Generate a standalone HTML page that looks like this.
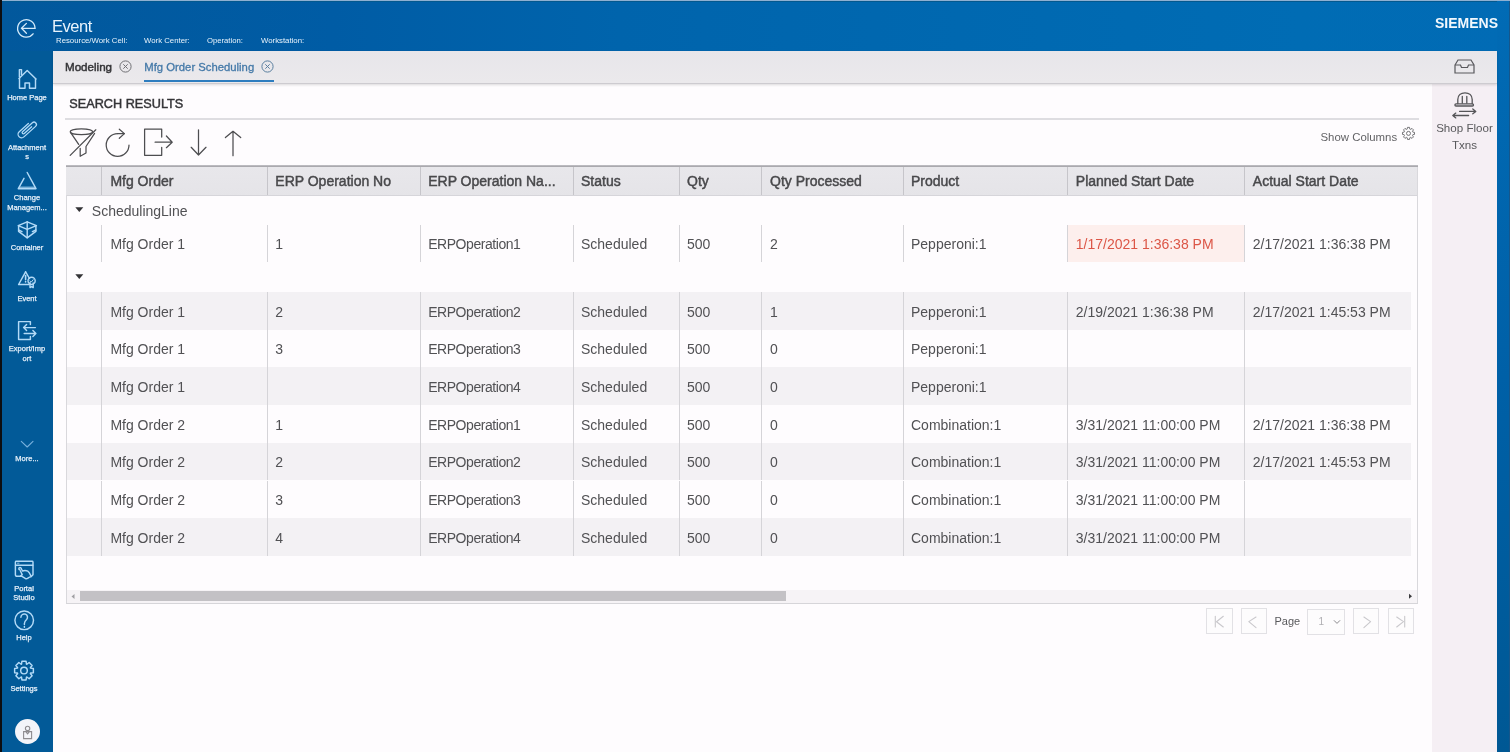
<!DOCTYPE html>
<html><head><meta charset="utf-8">
<style>
*{margin:0;padding:0;box-sizing:border-box}
html,body{will-change:transform;width:1510px;height:752px;overflow:hidden;background:#fefcfe;font-family:"Liberation Sans",sans-serif}
.a{position:absolute}
#hdr{left:0;top:0;width:1510px;height:51px;background:linear-gradient(90deg,#02589c 0%,#005ca5 22%,#0064ac 41%,#006cb4 86%,#016bb5 100%)}
#topline{left:0;top:0;width:1510px;height:1px;background:#8eb0d2;box-shadow:0 1px 0 #03598f}
#lstrip{left:0;top:0;width:2px;height:752px;background:#0d0d10}
#side{left:2px;top:51px;width:51px;height:701px;background:#025a98}
#rstrip{left:1497px;top:1px;width:13px;height:751px;background:linear-gradient(180deg,#016bb5 0%,#0060a7 50%,#005894 100%)}
.wt{color:#e8f3fc}
.sl{color:#e6f0fa;font-size:7.5px;text-align:center;width:50px;left:2px;line-height:9px;-webkit-text-stroke:0.25px #e6f0fa}
#tabbar{left:53px;top:51px;width:1444px;height:33px;background:linear-gradient(#e7e6ea,#ebe9ec);border-bottom:1px solid #cdcbd0;box-shadow:0 1px 2.5px rgba(0,0,0,.14)}
#content{left:53px;top:84px;width:1379px;height:668px;background:#fefcfe}
#rpanel{left:1432px;top:84px;width:65px;height:668px;background:#f5eff4}
.txt{color:#515154;font-size:14px;white-space:nowrap}
.hd{color:#48484b;font-size:14px;white-space:nowrap;-webkit-text-stroke:0.45px #48484b}
.vs{width:1px;background:#d5d4d8}
</style></head><body>
<div class="a" id="hdr"></div>
<div class="a" id="topline"></div>
<div class="a" id="side"></div>
<div class="a" id="lstrip"></div>
<div class="a" id="rstrip"></div>
<div class="a" style="left:1509px;top:1px;width:1px;height:751px;background:#17568a"></div>

<!-- header text -->
<svg class="a" style="left:14px;top:16px" width="24" height="24" viewBox="0 0 24 24" fill="none" stroke="#d4eafa" stroke-width="1.3" stroke-linecap="round">
<path d="M21 12.3 A8.7 8.7 0 1 0 19.1 17.8"/><path d="M7.8 12.3 H21"/><path d="M12.4 7.4 L7.5 12.3 L12.4 17.2"/>
</svg>
<div class="a wt" style="left:52px;top:16px;font-size:16.5px;letter-spacing:-0.45px;line-height:20px">Event</div>
<div class="a wt" style="left:56px;top:35.5px;font-size:7.8px;line-height:9px">Resource/Work Cell:</div>
<div class="a wt" style="left:144px;top:35.5px;font-size:7.8px;line-height:9px">Work Center:</div>
<div class="a wt" style="left:207px;top:35.5px;font-size:7.7px;line-height:9px">Operation:</div>
<div class="a wt" style="left:261px;top:35.5px;font-size:7.8px;line-height:9px">Workstation:</div>
<div class="a" style="left:1435px;top:14.5px;font-size:14px;font-weight:bold;color:#f2f8fd;line-height:17px">SIEMENS</div>


<!-- sidebar icons -->
<svg class="a" style="left:0;top:0" width="53" height="752" viewBox="0 0 53 752" fill="none" stroke="#b3daf7" stroke-width="1.45" stroke-linejoin="round" stroke-linecap="round">
<!-- home -->
<path d="M19.5 78.3 V88.3 H25 V83 H29.5 V88.3 H35.5 V78.8"/>
<path d="M19 78.5 L27.2 70.4 L36 79"/>
<path d="M19.4 76.8 V69.6 H21.5 V74.4"/>
<!-- clip -->
<g transform="translate(27,129.4) rotate(48)">
<path d="M-3.5 -5 V7.3 A3.5 3.5 0 0 0 3.5 7.3 V-8.4 A2.4 2.4 0 0 0 -1.3 -8.4 V4.8 A1.25 1.25 0 0 0 1.2 4.8 V-5.2" stroke-width="1.3"/>
</g>
<!-- delta -->
<path d="M27.2 172.5 L36 188.7 H18.3 L24 178.3"/>
<path d="M19.6 187.2 H34.8" stroke-width="1"/>
<!-- container -->
<path d="M18.2 225.6 L27.2 221.8 L36.4 225.6 L27.2 229.4 Z"/>
<path d="M27.2 221.8 V229.4 V237.8"/>
<path d="M18.6 226 V231.4 L27.2 237.8 L35.9 231.4 V226"/>
<path d="M18.6 230 L22 231.6 M35.9 230 L32.4 231.6"/>
<!-- event -->
<path d="M25.6 271.8 L18.6 284.5 H29"/><path d="M25.6 271.8 L29.5 278.5"/>
<path d="M25.6 275.6 V279.6" stroke-width="1.6"/><path d="M25.6 281.6 V282" stroke-width="1.6"/>
<circle cx="31.6" cy="280.8" r="3.6"/><path d="M30.1 280.9 L31.3 282.1 L33.2 279.7" stroke-width="1"/><path d="M30 282.5 L30 287.6 L31.6 286.6 L33.2 287.6 V283"/>
<!-- export -->
<path d="M30.4 324.6 V321.6 H18.6 V339.4 H30.4 V336.4"/>
<path d="M23.6 327.6 H35.4 M26.6 324.6 L23.6 327.6 L26.6 330.6"/>
<path d="M24.2 333.4 H35.9 M32.9 330.4 L35.9 333.4 L32.9 336.4"/>
<!-- more -->
<path d="M21.3 441.3 L27.2 447 L33 441.3" stroke-width="1.1" stroke="#78b0dc"/>
<!-- portal -->
<path d="M15.4 575 V562 A0.8 0.8 0 0 1 16.2 561.3 H32.2 A0.8 0.8 0 0 1 33 562 V574.8 L31 576.8 C28 577 27.5 579.5 25.6 578.6 L22 576.3 L16.2 576.3 Z"/>
<path d="M15.6 565.2 H32.8"/><path d="M17.5 563.2 H19" stroke-width="0.8"/>
<path d="M19.8 569.8 A1.2 1.2 0 1 1 21.2 568.5 L22.5 571 C24 570.4 26 570.3 27.8 571.2 C29.2 572 30 573.8 31 576"/>
<path d="M20.3 570.8 L22.2 574.6 L20.6 576"/>
<!-- help -->
<circle cx="24.2" cy="620.3" r="9.3"/>
<path d="M20.9 617.2 A3.3 3.3 0 1 1 26.6 619.5 C25.3 620.6 24.4 621.6 24.4 623.6 V624.6"/><path d="M24.4 626.6 V627.2" stroke-width="1.5"/>
<!-- gear -->
<path d="M21.53 664.05 L21.90 661.23 L26.10 661.23 L26.47 664.05 L26.89 664.22 L29.14 662.49 L32.11 665.46 L30.38 667.71 L30.55 668.13 L33.37 668.50 L33.37 672.70 L30.55 673.07 L30.38 673.49 L32.11 675.74 L29.14 678.71 L26.89 676.98 L26.47 677.15 L26.10 679.97 L21.90 679.97 L21.53 677.15 L21.11 676.98 L18.86 678.71 L15.89 675.74 L17.62 673.49 L17.45 673.07 L14.63 672.70 L14.63 668.50 L17.45 668.13 L17.62 667.71 L15.89 665.46 L18.86 662.49 L21.11 664.22 Z"/>
<circle cx="24" cy="670.6" r="3.3"/>
</svg>
<div class="a sl" style="top:92.5px">Home Page</div>
<div class="a sl" style="top:143px">Attachment</div>
<div class="a sl" style="top:151.5px">s</div>
<div class="a sl" style="top:193.3px">Change</div>
<div class="a sl" style="top:202.5px">Managem...</div>
<div class="a sl" style="top:243px">Container</div>
<div class="a sl" style="top:293.8px">Event</div>
<div class="a sl" style="top:344px">Export/Imp</div>
<div class="a sl" style="top:353.5px">ort</div>
<div class="a sl" style="top:453.8px">More...</div>
<div class="a sl" style="top:584px;left:-1px">Portal</div>
<div class="a sl" style="top:592.5px;left:-1px">Studio</div>
<div class="a sl" style="top:633px;left:-1px">Help</div>
<div class="a sl" style="top:683.5px;left:-1px">Settings</div>
<div class="a" style="left:14.7px;top:719px;width:25px;height:25px;border-radius:50%;background:#f3f4f9"></div>
<svg class="a" style="left:14.7px;top:719px" width="25" height="25" viewBox="0 0 25 25" fill="none" stroke="#8e8c90" stroke-width="1.1">
<circle cx="12.6" cy="9.4" r="2.2"/><path d="M8.6 12.6 H16.6 V19.6 H8.6 Z M10.8 12.6 L12.6 14.8 L14.4 12.6"/>
</svg>

<!-- tab bar -->
<div class="a" id="content"></div>
<div class="a" id="rpanel"></div>
<div class="a" id="tabbar"></div>
<div class="a" style="left:65px;top:59.5px;font-size:11.6px;color:#333336;line-height:13px;-webkit-text-stroke:0.45px #333336">Modeling</div>
<svg class="a" style="left:119px;top:60px" width="13" height="13" viewBox="0 0 13 13" fill="none" stroke="#707074" stroke-width="1"><circle cx="6.5" cy="6.5" r="5.6"/><path d="M4.3 4.3 L8.7 8.7 M8.7 4.3 L4.3 8.7"/></svg>
<div class="a" style="left:144.3px;top:60.6px;font-size:11.3px;color:#4479a8;line-height:13px;-webkit-text-stroke:0.3px #4479a8">Mfg Order Scheduling</div>
<svg class="a" style="left:261px;top:60px" width="13" height="13" viewBox="0 0 13 13" fill="none" stroke="#5a7f9f" stroke-width="1"><circle cx="6.5" cy="6.5" r="5.6"/><path d="M4.3 4.3 L8.7 8.7 M8.7 4.3 L4.3 8.7"/></svg>
<div class="a" style="left:144px;top:80px;width:130px;height:2px;background:#2e7dbf"></div>
<svg class="a" style="left:1454px;top:59px" width="21" height="15" viewBox="0 0 21 15" fill="none" stroke="#58585c" stroke-width="1.2">
<path d="M1 6 L4 1 H17 L20 6 V14 H1 Z"/><path d="M1 6 H6.5 L7.5 8.5 H13.5 L14.5 6 H20"/>
</svg>




<!-- right panel content -->
<svg class="a" style="left:1446px;top:84px" width="36" height="40" viewBox="1446 84 36 40" fill="none" stroke="#555558" stroke-width="1.3" stroke-linejoin="round" stroke-linecap="round">
<rect x="1454.9" y="103.8" width="18.6" height="2.2" rx="1.1"/>
<path d="M1457.8 103.6 V99.6 C1457.8 95.2 1461 92.9 1465 92.9 C1469 92.9 1472.2 95.2 1472.2 99.6 V103.6"/>
<path d="M1462.3 96.5 V103 M1466.8 96.5 V103"/>
<path d="M1459.6 111.4 H1475.6 M1472.8 109 L1475.8 111.4 L1472.8 113.8"/>
<path d="M1468.6 115.5 H1453 M1455.8 113.1 L1452.8 115.5 L1455.8 117.9"/>
</svg>
<div class="a" style="left:1432px;top:119.8px;width:65px;text-align:center;font-size:11.6px;line-height:16.7px;color:#59595c">Shop Floor<br>Txns</div>

<!-- section title -->
<div class="a" style="left:69.3px;top:95.8px;font-size:12.7px;line-height:16px;color:#343437;-webkit-text-stroke:0.45px #343437">SEARCH RESULTS</div>
<div class="a" style="left:65px;top:118px;width:1354px;height:1.5px;background:#dedde1"></div>

<!-- toolbar -->
<svg class="a" style="left:60px;top:122px" width="200" height="40" viewBox="60 122 200 40" fill="none" stroke="#4d4d50" stroke-width="1.25" stroke-linejoin="round" stroke-linecap="round">
<ellipse cx="81.4" cy="131.8" rx="11.2" ry="2.9"/>
<path d="M70.5 132.3 L78.7 144.4"/>
<path d="M80.2 148.3 V156.3 L86 153 V146.5 L94.6 133.4"/>
<path d="M70.2 155.4 L95.8 129.8"/>
<path d="M117.6 133.6 A11.4 11.4 0 1 0 129 145"/><path d="M117.6 133.6 H124.3"/>
<path d="M119.3 129.2 L124.4 133.6 L119.3 138.3"/>
<path d="M161.7 137 V129.1 H144.6 V155.3 H161.7 V147.3"/>
<path d="M155.1 142.2 H172 M166.4 136 L172.2 142.2 L166.4 147.7"/>
<path d="M198.5 129.8 V155 M191.2 147.3 L198.5 155 L206 147.3"/>
<path d="M233 131.3 V155.7 M225.4 137.5 L233 131.3 L240.7 137.5"/>
</svg>
<div class="a" style="left:1320.5px;top:129.8px;font-size:11.4px;line-height:14px;color:#636366">Show Columns</div>
<svg class="a" style="left:1401px;top:126px" width="15" height="15" viewBox="0 0 15 15" fill="none" stroke="#6e6e71" stroke-width="0.95" stroke-linejoin="round"><path d="M6.17 3.10 L6.47 1.39 L8.53 1.39 L8.83 3.10 L9.60 3.42 L11.02 2.42 L12.48 3.88 L11.48 5.30 L11.80 6.07 L13.51 6.37 L13.51 8.43 L11.80 8.73 L11.48 9.50 L12.48 10.92 L11.02 12.38 L9.60 11.38 L8.83 11.70 L8.53 13.41 L6.47 13.41 L6.17 11.70 L5.40 11.38 L3.98 12.38 L2.52 10.92 L3.52 9.50 L3.20 8.73 L1.49 8.43 L1.49 6.37 L3.20 6.07 L3.52 5.30 L2.52 3.88 L3.98 2.42 L5.40 3.42 Z"/><circle cx="7.5" cy="7.4" r="2"/></svg>


<!-- pagination -->
<div class="a" style="left:1206px;top:608px;width:26.5px;height:26px;border:1px solid #e2e1e5;background:#fdfcfd"></div>
<div class="a" style="left:1240.5px;top:608px;width:26.5px;height:26px;border:1px solid #e2e1e5;background:#fdfcfd"></div>
<div class="a" style="left:1307px;top:608.5px;width:37.5px;height:26px;border:1px solid #e2e1e5;background:#fdfcfd"></div>
<div class="a" style="left:1352.7px;top:608px;width:26.5px;height:26px;border:1px solid #e2e1e5;background:#fdfcfd"></div>
<div class="a" style="left:1387.6px;top:608px;width:26px;height:26px;border:1px solid #e2e1e5;background:#fdfcfd"></div>
<svg class="a" style="left:1200px;top:600px" width="220" height="42" viewBox="1200 600 220 42" fill="none" stroke="#c9c8cc" stroke-width="1.1" stroke-linejoin="round" stroke-linecap="round">
<path d="M1215.3 616.3 V627 M1223.3 616.3 L1216.5 621.7 L1223.3 627"/>
<path d="M1256 617 L1248.8 621.6 L1256 627.7"/>
<path d="M1363.9 617 L1370.6 621.6 L1363.9 627.7"/>
<path d="M1396.7 617 L1403.5 621.6 L1396.7 627 M1404.7 616.3 V627"/>
<path d="M1334.2 620.6 L1337 623.4 L1339.8 620.6" stroke="#8a898d" stroke-width="1"/>
</svg>
<div class="a" style="left:1274.5px;top:614px;font-size:11px;line-height:14px;color:#59595c">Page</div>
<div class="a" style="left:1318.5px;top:614.5px;font-size:10px;line-height:14px;color:#b0afb3">1</div>

<!-- TABLE START -->
<div class="a" style="left:66.2px;top:165px;width:1351.3999999999999px;height:2.5px;background:linear-gradient(#c4c3c8,#aaa9ae 50%,#d2d1d6)"></div>
<div class="a" style="left:66.2px;top:167px;width:1351.3999999999999px;height:28.5px;background:linear-gradient(#e8e7eb,#e5e4e8)"></div>
<div class="a" style="left:66.2px;top:194.5px;width:1351.3999999999999px;height:1px;background:#d6d5da"></div>
<div class="a vs" style="left:101.1px;top:167px;height:28px;background:#c6c5ca"></div>
<div class="a vs" style="left:266.7px;top:167px;height:28px;background:#c6c5ca"></div>
<div class="a vs" style="left:419.6px;top:167px;height:28px;background:#c6c5ca"></div>
<div class="a vs" style="left:573.0px;top:167px;height:28px;background:#c6c5ca"></div>
<div class="a vs" style="left:679.1px;top:167px;height:28px;background:#c6c5ca"></div>
<div class="a vs" style="left:761.0px;top:167px;height:28px;background:#c6c5ca"></div>
<div class="a vs" style="left:902.8px;top:167px;height:28px;background:#c6c5ca"></div>
<div class="a vs" style="left:1067.2px;top:167px;height:28px;background:#c6c5ca"></div>
<div class="a vs" style="left:1244.1px;top:167px;height:28px;background:#c6c5ca"></div>
<div class="a hd" style="left:110.4px;top:172px;line-height:18px">Mfg Order</div>
<div class="a hd" style="left:275.3px;top:172px;line-height:18px">ERP Operation No</div>
<div class="a hd" style="left:428.2px;top:172px;line-height:18px">ERP Operation Na...</div>
<div class="a hd" style="left:581px;top:172px;line-height:18px">Status</div>
<div class="a hd" style="left:687px;top:172px;line-height:18px">Qty</div>
<div class="a hd" style="left:770px;top:172px;line-height:18px">Qty Processed</div>
<div class="a hd" style="left:911px;top:172px;line-height:18px">Product</div>
<div class="a hd" style="left:1075.8px;top:172px;line-height:18px">Planned Start Date</div>
<div class="a hd" style="left:1252.8px;top:172px;line-height:18px">Actual Start Date</div>
<svg class="a" style="left:74.5px;top:207.2px" width="9" height="6" viewBox="0 0 9 6"><path d="M0.3 0.3 H8.3 L4.3 5 Z" fill="#333336"/></svg>
<div class="a txt" style="left:91.8px;top:202.1px;line-height:18px">SchedulingLine</div>
<div class="a" style="left:66.2px;top:224.50px;width:1344.8px;height:37.60px;background:#fefcfe"></div>
<div class="a" style="left:1068px;top:224.50px;width:176.5px;height:37.60px;background:#fdefed"></div>
<div class="a vs" style="left:101.1px;top:224.50px;height:37.60px"></div>
<div class="a vs" style="left:266.7px;top:224.50px;height:37.60px"></div>
<div class="a vs" style="left:419.6px;top:224.50px;height:37.60px"></div>
<div class="a vs" style="left:573.0px;top:224.50px;height:37.60px"></div>
<div class="a vs" style="left:679.1px;top:224.50px;height:37.60px"></div>
<div class="a vs" style="left:761.0px;top:224.50px;height:37.60px"></div>
<div class="a vs" style="left:902.8px;top:224.50px;height:37.60px"></div>
<div class="a vs" style="left:1067.2px;top:224.50px;height:37.60px"></div>
<div class="a vs" style="left:1244.1px;top:224.50px;height:37.60px"></div>
<div class="a txt" style="left:110.4px;top:234.9px;line-height:18px">Mfg Order 1</div>
<div class="a txt" style="left:275.3px;top:234.9px;line-height:18px">1</div>
<div class="a txt" style="letter-spacing:-0.45px;left:428.2px;top:234.9px;line-height:18px">ERPOperation1</div>
<div class="a txt" style="left:581px;top:234.9px;line-height:18px">Scheduled</div>
<div class="a txt" style="left:687px;top:234.9px;line-height:18px">500</div>
<div class="a txt" style="left:770px;top:234.9px;line-height:18px">2</div>
<div class="a txt" style="left:911px;top:234.9px;line-height:18px">Pepperoni:1</div>
<div class="a txt" style="color:#dc5647;left:1075.8px;top:234.9px;line-height:18px">1/17/2021 1:36:38 PM</div>
<div class="a txt" style="left:1252.8px;top:234.9px;line-height:18px">2/17/2021 1:36:38 PM</div>
<svg class="a" style="left:74.5px;top:274.4px" width="9" height="6" viewBox="0 0 9 6"><path d="M0.3 0.3 H8.3 L4.3 5 Z" fill="#333336"/></svg>
<div class="a" style="left:66.2px;top:292.00px;width:1344.8px;height:37.70px;background:#f3f1f4"></div>
<div class="a vs" style="left:101.1px;top:292.00px;height:37.70px"></div>
<div class="a vs" style="left:266.7px;top:292.00px;height:37.70px"></div>
<div class="a vs" style="left:419.6px;top:292.00px;height:37.70px"></div>
<div class="a vs" style="left:573.0px;top:292.00px;height:37.70px"></div>
<div class="a vs" style="left:679.1px;top:292.00px;height:37.70px"></div>
<div class="a vs" style="left:761.0px;top:292.00px;height:37.70px"></div>
<div class="a vs" style="left:902.8px;top:292.00px;height:37.70px"></div>
<div class="a vs" style="left:1067.2px;top:292.00px;height:37.70px"></div>
<div class="a vs" style="left:1244.1px;top:292.00px;height:37.70px"></div>
<div class="a txt" style="left:110.4px;top:302.5px;line-height:18px">Mfg Order 1</div>
<div class="a txt" style="left:275.3px;top:302.5px;line-height:18px">2</div>
<div class="a txt" style="letter-spacing:-0.45px;left:428.2px;top:302.5px;line-height:18px">ERPOperation2</div>
<div class="a txt" style="left:581px;top:302.5px;line-height:18px">Scheduled</div>
<div class="a txt" style="left:687px;top:302.5px;line-height:18px">500</div>
<div class="a txt" style="left:770px;top:302.5px;line-height:18px">1</div>
<div class="a txt" style="left:911px;top:302.5px;line-height:18px">Pepperoni:1</div>
<div class="a txt" style="left:1075.8px;top:302.5px;line-height:18px">2/19/2021 1:36:38 PM</div>
<div class="a txt" style="left:1252.8px;top:302.5px;line-height:18px">2/17/2021 1:45:53 PM</div>
<div class="a" style="left:66.2px;top:329.70px;width:1344.8px;height:37.70px;background:#fefcfe"></div>
<div class="a vs" style="left:101.1px;top:329.70px;height:37.70px"></div>
<div class="a vs" style="left:266.7px;top:329.70px;height:37.70px"></div>
<div class="a vs" style="left:419.6px;top:329.70px;height:37.70px"></div>
<div class="a vs" style="left:573.0px;top:329.70px;height:37.70px"></div>
<div class="a vs" style="left:679.1px;top:329.70px;height:37.70px"></div>
<div class="a vs" style="left:761.0px;top:329.70px;height:37.70px"></div>
<div class="a vs" style="left:902.8px;top:329.70px;height:37.70px"></div>
<div class="a vs" style="left:1067.2px;top:329.70px;height:37.70px"></div>
<div class="a vs" style="left:1244.1px;top:329.70px;height:37.70px"></div>
<div class="a txt" style="left:110.4px;top:340.2px;line-height:18px">Mfg Order 1</div>
<div class="a txt" style="left:275.3px;top:340.2px;line-height:18px">3</div>
<div class="a txt" style="letter-spacing:-0.45px;left:428.2px;top:340.2px;line-height:18px">ERPOperation3</div>
<div class="a txt" style="left:581px;top:340.2px;line-height:18px">Scheduled</div>
<div class="a txt" style="left:687px;top:340.2px;line-height:18px">500</div>
<div class="a txt" style="left:770px;top:340.2px;line-height:18px">0</div>
<div class="a txt" style="left:911px;top:340.2px;line-height:18px">Pepperoni:1</div>
<div class="a" style="left:66.2px;top:367.40px;width:1344.8px;height:37.70px;background:#f3f1f4"></div>
<div class="a vs" style="left:101.1px;top:367.40px;height:37.70px"></div>
<div class="a vs" style="left:266.7px;top:367.40px;height:37.70px"></div>
<div class="a vs" style="left:419.6px;top:367.40px;height:37.70px"></div>
<div class="a vs" style="left:573.0px;top:367.40px;height:37.70px"></div>
<div class="a vs" style="left:679.1px;top:367.40px;height:37.70px"></div>
<div class="a vs" style="left:761.0px;top:367.40px;height:37.70px"></div>
<div class="a vs" style="left:902.8px;top:367.40px;height:37.70px"></div>
<div class="a vs" style="left:1067.2px;top:367.40px;height:37.70px"></div>
<div class="a vs" style="left:1244.1px;top:367.40px;height:37.70px"></div>
<div class="a txt" style="left:110.4px;top:377.9px;line-height:18px">Mfg Order 1</div>
<div class="a txt" style="letter-spacing:-0.45px;left:428.2px;top:377.9px;line-height:18px">ERPOperation4</div>
<div class="a txt" style="left:581px;top:377.9px;line-height:18px">Scheduled</div>
<div class="a txt" style="left:687px;top:377.9px;line-height:18px">500</div>
<div class="a txt" style="left:770px;top:377.9px;line-height:18px">0</div>
<div class="a txt" style="left:911px;top:377.9px;line-height:18px">Pepperoni:1</div>
<div class="a" style="left:66.2px;top:405.10px;width:1344.8px;height:37.70px;background:#fefcfe"></div>
<div class="a vs" style="left:101.1px;top:405.10px;height:37.70px"></div>
<div class="a vs" style="left:266.7px;top:405.10px;height:37.70px"></div>
<div class="a vs" style="left:419.6px;top:405.10px;height:37.70px"></div>
<div class="a vs" style="left:573.0px;top:405.10px;height:37.70px"></div>
<div class="a vs" style="left:679.1px;top:405.10px;height:37.70px"></div>
<div class="a vs" style="left:761.0px;top:405.10px;height:37.70px"></div>
<div class="a vs" style="left:902.8px;top:405.10px;height:37.70px"></div>
<div class="a vs" style="left:1067.2px;top:405.10px;height:37.70px"></div>
<div class="a vs" style="left:1244.1px;top:405.10px;height:37.70px"></div>
<div class="a txt" style="left:110.4px;top:415.6px;line-height:18px">Mfg Order 2</div>
<div class="a txt" style="left:275.3px;top:415.6px;line-height:18px">1</div>
<div class="a txt" style="letter-spacing:-0.45px;left:428.2px;top:415.6px;line-height:18px">ERPOperation1</div>
<div class="a txt" style="left:581px;top:415.6px;line-height:18px">Scheduled</div>
<div class="a txt" style="left:687px;top:415.6px;line-height:18px">500</div>
<div class="a txt" style="left:770px;top:415.6px;line-height:18px">0</div>
<div class="a txt" style="left:911px;top:415.6px;line-height:18px">Combination:1</div>
<div class="a txt" style="left:1075.8px;top:415.6px;line-height:18px">3/31/2021 11:00:00 PM</div>
<div class="a txt" style="left:1252.8px;top:415.6px;line-height:18px">2/17/2021 1:36:38 PM</div>
<div class="a" style="left:66.2px;top:442.80px;width:1344.8px;height:37.70px;background:#f3f1f4"></div>
<div class="a vs" style="left:101.1px;top:442.80px;height:37.70px"></div>
<div class="a vs" style="left:266.7px;top:442.80px;height:37.70px"></div>
<div class="a vs" style="left:419.6px;top:442.80px;height:37.70px"></div>
<div class="a vs" style="left:573.0px;top:442.80px;height:37.70px"></div>
<div class="a vs" style="left:679.1px;top:442.80px;height:37.70px"></div>
<div class="a vs" style="left:761.0px;top:442.80px;height:37.70px"></div>
<div class="a vs" style="left:902.8px;top:442.80px;height:37.70px"></div>
<div class="a vs" style="left:1067.2px;top:442.80px;height:37.70px"></div>
<div class="a vs" style="left:1244.1px;top:442.80px;height:37.70px"></div>
<div class="a txt" style="left:110.4px;top:453.2px;line-height:18px">Mfg Order 2</div>
<div class="a txt" style="left:275.3px;top:453.2px;line-height:18px">2</div>
<div class="a txt" style="letter-spacing:-0.45px;left:428.2px;top:453.2px;line-height:18px">ERPOperation2</div>
<div class="a txt" style="left:581px;top:453.2px;line-height:18px">Scheduled</div>
<div class="a txt" style="left:687px;top:453.2px;line-height:18px">500</div>
<div class="a txt" style="left:770px;top:453.2px;line-height:18px">0</div>
<div class="a txt" style="left:911px;top:453.2px;line-height:18px">Combination:1</div>
<div class="a txt" style="left:1075.8px;top:453.2px;line-height:18px">3/31/2021 11:00:00 PM</div>
<div class="a txt" style="left:1252.8px;top:453.2px;line-height:18px">2/17/2021 1:45:53 PM</div>
<div class="a" style="left:66.2px;top:480.50px;width:1344.8px;height:37.70px;background:#fefcfe"></div>
<div class="a vs" style="left:101.1px;top:480.50px;height:37.70px"></div>
<div class="a vs" style="left:266.7px;top:480.50px;height:37.70px"></div>
<div class="a vs" style="left:419.6px;top:480.50px;height:37.70px"></div>
<div class="a vs" style="left:573.0px;top:480.50px;height:37.70px"></div>
<div class="a vs" style="left:679.1px;top:480.50px;height:37.70px"></div>
<div class="a vs" style="left:761.0px;top:480.50px;height:37.70px"></div>
<div class="a vs" style="left:902.8px;top:480.50px;height:37.70px"></div>
<div class="a vs" style="left:1067.2px;top:480.50px;height:37.70px"></div>
<div class="a vs" style="left:1244.1px;top:480.50px;height:37.70px"></div>
<div class="a txt" style="left:110.4px;top:490.9px;line-height:18px">Mfg Order 2</div>
<div class="a txt" style="left:275.3px;top:490.9px;line-height:18px">3</div>
<div class="a txt" style="letter-spacing:-0.45px;left:428.2px;top:490.9px;line-height:18px">ERPOperation3</div>
<div class="a txt" style="left:581px;top:490.9px;line-height:18px">Scheduled</div>
<div class="a txt" style="left:687px;top:490.9px;line-height:18px">500</div>
<div class="a txt" style="left:770px;top:490.9px;line-height:18px">0</div>
<div class="a txt" style="left:911px;top:490.9px;line-height:18px">Combination:1</div>
<div class="a txt" style="left:1075.8px;top:490.9px;line-height:18px">3/31/2021 11:00:00 PM</div>
<div class="a" style="left:66.2px;top:518.20px;width:1344.8px;height:37.70px;background:#f3f1f4"></div>
<div class="a vs" style="left:101.1px;top:518.20px;height:37.70px"></div>
<div class="a vs" style="left:266.7px;top:518.20px;height:37.70px"></div>
<div class="a vs" style="left:419.6px;top:518.20px;height:37.70px"></div>
<div class="a vs" style="left:573.0px;top:518.20px;height:37.70px"></div>
<div class="a vs" style="left:679.1px;top:518.20px;height:37.70px"></div>
<div class="a vs" style="left:761.0px;top:518.20px;height:37.70px"></div>
<div class="a vs" style="left:902.8px;top:518.20px;height:37.70px"></div>
<div class="a vs" style="left:1067.2px;top:518.20px;height:37.70px"></div>
<div class="a vs" style="left:1244.1px;top:518.20px;height:37.70px"></div>
<div class="a txt" style="left:110.4px;top:528.6px;line-height:18px">Mfg Order 2</div>
<div class="a txt" style="left:275.3px;top:528.6px;line-height:18px">4</div>
<div class="a txt" style="letter-spacing:-0.45px;left:428.2px;top:528.6px;line-height:18px">ERPOperation4</div>
<div class="a txt" style="left:581px;top:528.6px;line-height:18px">Scheduled</div>
<div class="a txt" style="left:687px;top:528.6px;line-height:18px">500</div>
<div class="a txt" style="left:770px;top:528.6px;line-height:18px">0</div>
<div class="a txt" style="left:911px;top:528.6px;line-height:18px">Combination:1</div>
<div class="a txt" style="left:1075.8px;top:528.6px;line-height:18px">3/31/2021 11:00:00 PM</div>
<div class="a" style="left:65.7px;top:195px;width:1px;height:409px;background:#d9d8dc"></div>
<div class="a" style="left:1417.1px;top:167px;width:1px;height:437px;background:#d9d8dc"></div>
<div class="a" style="left:65.7px;top:603px;width:1352.4px;height:1px;background:#d6d5d9"></div>
<div class="a" style="left:66.7px;top:590px;width:1350.4px;height:13px;background:#f6f3f6"></div>
<div class="a" style="left:80px;top:591.3px;width:706px;height:9.7px;background:#c3c1c5"></div>
<svg class="a" style="left:70px;top:593px" width="6" height="7" viewBox="0 0 6 7"><path d="M4.5 1 V6 L1.5 3.5 Z" fill="#a09fa3"/></svg>
<svg class="a" style="left:1408px;top:593px" width="6" height="7" viewBox="0 0 6 7"><path d="M1 0.8 V5.8 L4 3.3 Z" fill="#3a3a3d"/></svg>
<!-- TABLE END -->
</body></html>
